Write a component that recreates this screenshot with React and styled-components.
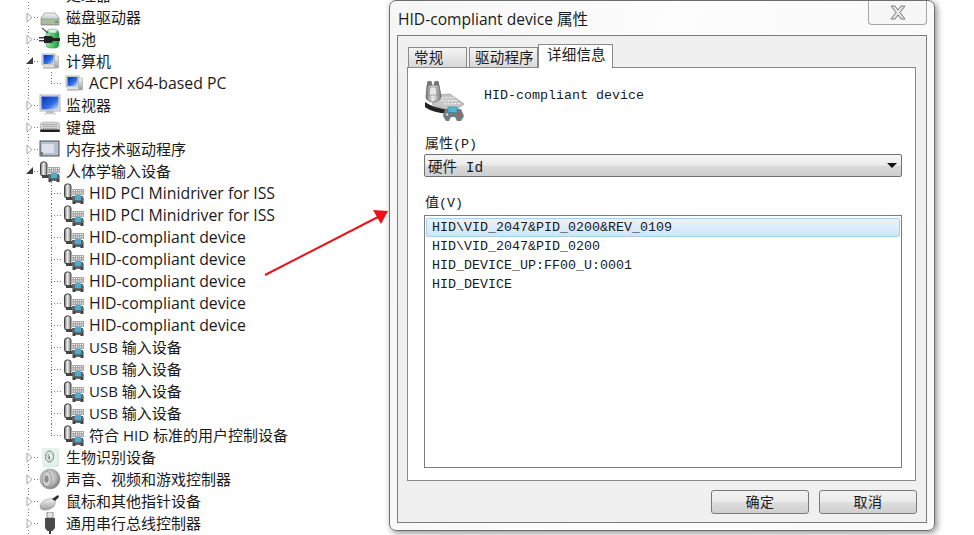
import React from "react";
import styled, { createGlobalStyle } from "styled-components";

const Global = createGlobalStyle`
  html, body { margin: 0; padding: 0; background: #fff; overflow: hidden; }
  body { width: 974px; height: 535px; }
`;

const Page = styled.div`
  position: relative;
  display: flex;
  align-items: flex-start;
  width: 974px;
  height: 535px;
  overflow: hidden;
  background: #fff;
  font-family: "Open Sans", "Noto Sans CJK SC", sans-serif;
  color: #1a1a1a;
`;

/* ---------- Device tree ---------- */
const dots = "repeating-linear-gradient(to bottom, #777 0 1px, transparent 1px 3px)";
const hdots = "repeating-linear-gradient(to right, #777 0 1px, transparent 1px 3px)";

const Tree = styled.div`
  flex: 0 0 389px;
  height: 535px;
  margin-top: -16px;
  padding-left: 26px;
  box-sizing: border-box;
`;
const Trunk = styled.div`
  background: ${dots} 2px 0 / 1px 100% no-repeat;
`;
const Row = styled.div`
  display: flex;
  align-items: center;
  height: 22px;
`;
const Expander = styled.span`
  flex: 0 0 7px;
  height: 13px;
  margin-right: 1px;
  display: flex;
  align-items: center;
  background: #fff;
`;
const Stub = styled.span`
  flex: 0 0 6px;
  height: 1px;
  background: ${hdots};
`;
const IconSlot = styled.span`
  flex: 0 0 22px;
  height: 22px;
  margin-right: ${(p) => p.$gap}px;
  display: block;
  margin-left: -1px;
`;
const Label = styled.span`
  font-size: ${(p) => (p.$latin ? 15.8 : 15)}px;
  line-height: 22px;
  white-space: nowrap;
`;
const ChildRow = styled.div`
  display: flex;
  align-items: center;
  height: 22px;
  margin-left: 25px;
  padding-left: 13px;
  background:
    ${dots} 0 0 / 1px ${(p) => (p.$last ? "50%" : "100%")} no-repeat,
    ${hdots} 0 50% / 12px 1px no-repeat;
`;

/* ---------- Dialog ---------- */
const Dialog = styled.div`
  flex: 0 0 546px;
  height: 531px;
  box-sizing: border-box;
  border: 1px solid #6f6f6f;
  border-radius: 7px;
  background: linear-gradient(100deg, #f6f6f6 0%, #fdfdfd 45%, #f9f9f9 100%);
  box-shadow: 2px 2px 6px rgba(0, 0, 0, 0.45);
  padding: 0 7px 7px;
  display: flex;
  flex-direction: column;
  position: relative;
`;
const TitleBar = styled.div`
  height: 34px;
  display: flex;
  align-items: flex-start;
  justify-content: space-between;
  flex: 0 0 34px;
`;
const Title = styled.div`
  font-size: 15.6px;
  line-height: 20px;
  margin: 8px 0 0 1px;
`;
const CloseButton = styled.div`
  width: 59px;
  height: 24px;
  box-sizing: border-box;
  border: 1px solid #a5a5a5;
  border-top: 0;
  border-radius: 0 0 4px 4px;
  background: #f7f7f7;
  display: flex;
  align-items: center;
  justify-content: center;
`;
const Frame = styled.div`
  flex: 1;
  box-sizing: border-box;
  border: 1px solid #7c7c7c;
  background: #f0f0f0;
  padding: 8px 10px 0 9px;
  display: flex;
  flex-direction: column;
`;
const Tabs = styled.div`
  display: flex;
  align-items: flex-end;
  height: 24px;
  padding-left: 1px;
  position: relative;
  z-index: 1;
`;
const Tab = styled.div`
  box-sizing: border-box;
  width: ${(p) => p.$w}px;
  height: ${(p) => (p.$active ? 24 : 21)}px;
  margin-right: ${(p) => p.$gap || 0}px;
  border: 1px solid #8a8a8a;
  border-bottom: ${(p) => (p.$active ? "0" : "1px solid #8a8a8a")};
  background: ${(p) => (p.$active ? "#fff" : "linear-gradient(#f4f4f4, #d8d8d8)")};
  font-size: 14.5px;
  line-height: 19px;
  padding-left: ${(p) => (p.$active ? 8 : 5)}px;
  white-space: nowrap;
  letter-spacing: 0.2px;
`;
const Panel = styled.div`
  height: 414px;
  box-sizing: border-box;
  margin-top: -1px;
  border: 1px solid #8a8a8a;
  background: #fff;
  padding: 12px 13px 12px 16px;
  display: flex;
  flex-direction: column;
`;
const Header = styled.div`
  display: flex;
  align-items: flex-start;
  height: 42px;
`;
const DeviceName = styled.div`
  font-family: "Liberation Mono", monospace;
  font-size: 13.33px;
  line-height: 16px;
  margin: 8px 0 0 18px;
`;
const FieldLabel = styled.div`
  font-size: 14px;
  line-height: 20px;
  margin-top: ${(p) => p.$top}px;
  margin-bottom: ${(p) => p.$bottom}px;
  padding-left: 1px;
  font-family: "Noto Sans CJK SC", sans-serif;
  span { font-family: "Liberation Mono", monospace; font-size: 13.33px; }
`;
const Combo = styled.div`
  height: 23px;
  flex: 0 0 23px;
  box-sizing: border-box;
  border: 1px solid #727272;
  border-radius: 2px;
  background: linear-gradient(#f5f5f5 0%, #ececec 45%, #d9d9d9 55%, #cfcfcf 100%);
  display: flex;
  align-items: center;
  justify-content: space-between;
  padding: 0 4px 0 3px;
  font-family: "Liberation Mono", "Noto Sans CJK SC", monospace;
  font-size: 14.5px;
  white-space: pre;
`;
const Caret = styled.div`
  width: 0;
  height: 0;
  border-left: 5px solid transparent;
  border-right: 5px solid transparent;
  border-top: 5px solid #111;
`;
const ValueList = styled.div`
  flex: 1;
  box-sizing: border-box;
  border: 1px solid #7c7c7c;
  padding: 2px 1px;
  display: flex;
  flex-direction: column;
  font-family: "Liberation Mono", monospace;
  font-size: 13.33px;
`;
const ValueRow = styled.div`
  height: 19px;
  line-height: 20px;
  box-sizing: border-box;
  padding-left: 6px;
  white-space: nowrap;
  ${(p) =>
    p.$selected &&
    `border: 1px solid #a9cfee;
     border-radius: 2px;
     padding-left: 5px;
     line-height: 18px;
     background: linear-gradient(#e9f4fd, #cfe5f8);`}
`;
const Footer = styled.div`
  display: flex;
  justify-content: flex-end;
  gap: 10px;
  margin: 9px -1px 0 0;
`;
const Button = styled.div`
  width: 98px;
  height: 24px;
  box-sizing: border-box;
  border: 1px solid #7a7a7a;
  border-radius: 3px;
  background: linear-gradient(#f3f3f3 0%, #ebebeb 45%, #dcdcdc 55%, #cfcfcf 100%);
  font-size: 14px;
  line-height: 22px;
  text-align: center;
  letter-spacing: 0.5px;
`;
const ArrowLayer = styled.svg`
  position: absolute;
  left: 0;
  top: 0;
  pointer-events: none;
`;

/* ---------- Icons ---------- */
const Svg = ({ children }) => (
  <svg width="22" height="22" viewBox="0 0 22 22" style={{ display: "block" }}>{children}</svg>
);
const Defs = () => (
  <svg width="0" height="0" style={{ position: "absolute" }}>
    <defs>
      <linearGradient id="blue" x1="0" y1="0" x2="1" y2="1">
        <stop offset="0" stopColor="#0a2fb8" />
        <stop offset="0.6" stopColor="#2f6fe0" />
        <stop offset="1" stopColor="#d8e4f6" />
      </linearGradient>
      <linearGradient id="silver" x1="0" y1="0" x2="0" y2="1">
        <stop offset="0" stopColor="#f4f4f4" />
        <stop offset="1" stopColor="#9c9c9c" />
      </linearGradient>
      <linearGradient id="green" x1="0" y1="0" x2="1" y2="0">
        <stop offset="0" stopColor="#9be8a4" />
        <stop offset="1" stopColor="#169a3e" />
      </linearGradient>
      <linearGradient id="body" x1="0" y1="0" x2="1" y2="0">
        <stop offset="0" stopColor="#6e6e6e" />
        <stop offset="0.45" stopColor="#ededed" />
        <stop offset="1" stopColor="#777" />
      </linearGradient>
      <radialGradient id="sphere" cx="0.4" cy="0.4" r="0.7">
        <stop offset="0" stopColor="#f2f2f2" />
        <stop offset="0.6" stopColor="#b4b4b4" />
        <stop offset="1" stopColor="#666" />
      </radialGradient>
    </defs>
  </svg>
);

const icons = {
  cpu: (
    <Svg><rect x="2" y="-4" width="18" height="8" rx="1" fill="url(#silver)" stroke="#888" /></Svg>
  ),
  disk: (
    <Svg>
      <path d="M2 12 L6 7 H16 L20 12 V19 H2 Z" fill="url(#silver)" stroke="#8a8a8a" strokeWidth=".7" />
      <rect x="2.5" y="13" width="17" height="5.5" fill="#a8bca0" stroke="#8c8c8c" strokeWidth=".5" />
      <rect x="16" y="15" width="3" height="2" fill="#3fae4e" />
    </Svg>
  ),
  battery: (
    <Svg>
      <rect x="7" y="2" width="13" height="18" rx="4" fill="url(#green)" stroke="#3f8e55" strokeWidth=".6" />
      <rect x="9" y="1" width="9" height="4" rx="2" fill="#d6efd9" stroke="#6a9c75" strokeWidth=".5" />
      <path d="M3 0 L9 5" stroke="#555" strokeWidth="1.2" fill="none" />
      <rect x="0" y="9" width="7" height="1.4" fill="#333" />
      <rect x="0" y="12" width="7" height="1.4" fill="#333" />
      <path d="M5 8 H11 A3.5 3.5 0 0 1 11 15 H5 Z" fill="#222" />
      <rect x="13" y="10" width="8" height="3" fill="#222" />
    </Svg>
  ),
  computer: (
    <Svg>
      <rect x="3" y="4" width="13" height="11" fill="#dfe4ea" stroke="#9aa0a8" strokeWidth=".7" />
      <rect x="4.5" y="5" width="10" height="9" fill="url(#blue)" />
      <rect x="15.5" y="6" width="4" height="12" fill="url(#silver)" stroke="#999" strokeWidth=".5" />
      <rect x="4" y="16" width="11" height="2.5" fill="url(#silver)" />
    </Svg>
  ),
  monitor: (
    <Svg>
      <rect x="1" y="1" width="20" height="16" fill="#e8e8e8" stroke="#999" strokeWidth=".7" />
      <rect x="2.5" y="2.5" width="17" height="13" fill="url(#blue)" />
      <rect x="7" y="17" width="8" height="2" fill="#bdbdbd" />
      <rect x="5" y="19" width="12" height="1.5" fill="#d4d4d4" />
    </Svg>
  ),
  keyboard: (
    <Svg>
      <rect x="1" y="6" width="20" height="9" rx="4" fill="#d4d4d4" stroke="#9c9c9c" strokeWidth=".5" />
      <path d="M4 8.5 H18 M4 10.5 H18 M4 12.5 H18" stroke="#8f8f8f" strokeWidth="1" strokeDasharray="1 .8" />
      <rect x="1" y="13.5" width="20" height="2.5" rx="1.2" fill="#1f1f1f" />
    </Svg>
  ),
  memory: (
    <Svg>
      <rect x="1" y="3" width="19" height="15" fill="#b9c0d2" stroke="#2a2a2a" strokeWidth=".8" />
      <rect x="3" y="6" width="12" height="9" fill="#dde1ec" />
      <rect x="1" y="14" width="3" height="4" fill="#777" />
    </Svg>
  ),
  hid: (
    <Svg>
      <rect x="1.5" y="2" width="6.5" height="14" rx="2.5" fill="url(#body)" stroke="#3f3f3f" strokeWidth="1" />
      <rect x="3" y="15" width="6" height="3" fill="#444" />
      <rect x="8" y="7" width="13" height="6" fill="#a9a9a9" />
      <path d="M9 8.5 H20 M9 11 H20" stroke="#f5f5f5" strokeWidth="1" strokeDasharray="1 1" />
      <path d="M9 14 H20 L21 18 L19 21 H11 L9 18 Z" fill="#5f6669" />
      <rect x="12" y="13" width="6" height="5" fill="#4dadcf" />
      <rect x="9.5" y="19" width="3" height="3" fill="#444" />
      <rect x="17.5" y="19" width="3" height="3" fill="#444" />
    </Svg>
  ),
  bio: (
    <Svg>
      <rect x="3" y="2" width="15" height="17" fill="#e6f1ec" />
      <path d="M19 3 V20 H4" stroke="#b8d8cf" fill="none" />
      <ellipse cx="10.5" cy="10.5" rx="4" ry="5.5" fill="none" stroke="#6f7c76" strokeWidth="1" />
      <path d="M10.5 8 C8 8 9 13 11 14 M10.5 10 V13" fill="none" stroke="#6f7c76" strokeWidth=".9" />
    </Svg>
  ),
  speaker: (
    <Svg>
      <circle cx="11" cy="11" r="10" fill="url(#sphere)" stroke="#8a8a8a" strokeWidth=".6" />
      <ellipse cx="8" cy="11" rx="4.5" ry="7.5" fill="#d0d0d0" stroke="#7b7b7b" strokeWidth=".6" />
      <ellipse cx="7.5" cy="11" rx="2" ry="3.5" fill="#8a8a8a" />
    </Svg>
  ),
  mouse: (
    <Svg>
      <path d="M1 16 C2 11 9 8 14 9 C17 10 17 13 15 16 C12 20 5 21 2 19 Z" fill="url(#silver)" stroke="#8f8f8f" strokeWidth=".6" />
      <path d="M13 9 L19 5 L20 7 L16 11 Z" fill="#2a2a2a" />
    </Svg>
  ),
  usb: (
    <Svg>
      <rect x="8" y="0" width="6" height="6" fill="#e4e4e4" stroke="#777" strokeWidth=".8" />
      <path d="M6 6 H16 V16 L13.5 19 H8.5 L6 16 Z" fill="#4a4a4a" />
      <rect x="10" y="19" width="2" height="3" fill="#3a3a3a" />
    </Svg>
  ),
};

const BigDeviceIcon = () => (
  <svg width="42" height="42" viewBox="0 0 42 42" style={{ display: "block", flex: "0 0 42px" }}>
    <path d="M1 22 C8 27 20 30 32 29 L32 33 C18 35 6 31 1 27 Z" fill="#222" />
    <path d="M14 15 L26 14 L40 24 L32 30 C20 30 12 27 8 24 Z" fill="#c4c4c4" stroke="#8b8b8b" strokeWidth=".6" />
    <path d="M18 18 L30 17.5 M17 21 L34 20.5 M20 24 L37 23.5" stroke="#f6f6f6" strokeWidth="1.2" strokeDasharray="2 1.4" />
    <rect x="3" y="1" width="5" height="5" rx="1.5" fill="#777" />
    <rect x="10" y="1" width="5" height="5" rx="1.5" fill="#777" />
    <path d="M3 5 H15 L17 16 C16 23 5 24 2 18 Z" fill="url(#body)" stroke="#5f5f5f" strokeWidth=".7" />
    <path d="M6 7 H12 L13 15 H5 Z" fill="#e8e8e8" stroke="#7d7d7d" strokeWidth=".6" />
    <path d="M21 29 H37 L40 36 L37 41 H33 L31 37 H27 L25 41 H22 L19 36 Z" fill="#747b7e" />
    <rect x="24" y="27" width="9" height="5.5" fill="#55b5d4" stroke="#2d7f9c" strokeWidth=".6" />
    <circle cx="35.5" cy="34" r="1.2" fill="#e04a3a" />
    <circle cx="23" cy="34.5" r="1.2" fill="#d8d8d8" />
  </svg>
);

const Triangle = ({ open }) =>
  open ? (
    <svg width="7" height="8" viewBox="0 0 7 8"><path d="M7 0 V7 H0 Z" fill="#3a3a3a" /></svg>
  ) : (
    <svg width="7" height="11" viewBox="0 0 7 11"><path d="M1 1 L6 5.5 L1 10 Z" fill="#fff" stroke="#a6a6a6" /></svg>
  );

const isLatin = (s) => /^[\x20-\x7e]+$/.test(s);

const tree = [
  { icon: "cpu", label: "处理器" },
  { icon: "disk", label: "磁盘驱动器" },
  { icon: "battery", label: "电池" },
  { icon: "computer", label: "计算机", open: true, children: [{ icon: "computer", label: "ACPI x64-based PC" }] },
  { icon: "monitor", label: "监视器" },
  { icon: "keyboard", label: "键盘" },
  { icon: "memory", label: "内存技术驱动程序" },
  {
    icon: "hid",
    label: "人体学输入设备",
    open: true,
    children: [
      "HID PCI Minidriver for ISS",
      "HID PCI Minidriver for ISS",
      "HID-compliant device",
      "HID-compliant device",
      "HID-compliant device",
      "HID-compliant device",
      "HID-compliant device",
      "USB 输入设备",
      "USB 输入设备",
      "USB 输入设备",
      "USB 输入设备",
      "符合 HID 标准的用户控制设备",
    ].map((label) => ({ icon: "hid", label })),
  },
  { icon: "bio", label: "生物识别设备" },
  { icon: "speaker", label: "声音、视频和游戏控制器" },
  { icon: "mouse", label: "鼠标和其他指针设备" },
  { icon: "usb", label: "通用串行总线控制器" },
];

const values = [
  "HID\\VID_2047&PID_0200&REV_0109",
  "HID\\VID_2047&PID_0200",
  "HID_DEVICE_UP:FF00_U:0001",
  "HID_DEVICE",
];

export default function App() {
  return (
    <Page>
      <Global />
      <Defs />
      <Tree>
        <Trunk>
          {tree.map((node) => (
            <React.Fragment key={node.label}>
              <Row>
                <Expander><Triangle open={node.open} /></Expander>
                <Stub />
                <IconSlot $gap={5}>{icons[node.icon]}</IconSlot>
                <Label>{node.label}</Label>
              </Row>
              {node.children &&
                node.children.map((c, i) => (
                  <ChildRow key={i} $last={i === node.children.length - 1}>
                    <IconSlot $gap={4}>{icons[c.icon]}</IconSlot>
                    <Label $latin={isLatin(c.label)}>{c.label}</Label>
                  </ChildRow>
                ))}
            </React.Fragment>
          ))}
        </Trunk>
      </Tree>
      <Dialog>
        <TitleBar>
          <Title>HID-compliant device 属性</Title>
          <CloseButton>
            <svg width="16" height="15" viewBox="0 0 16 15">
              <path d="M1 1 H5 L8 5 L11 1 H15 L10 7.5 L15 14 H11 L8 10 L5 14 H1 L6 7.5 Z" fill="#e6e6e6" stroke="#777" strokeWidth="1" strokeLinejoin="round" />
            </svg>
          </CloseButton>
        </TitleBar>
        <Frame>
          <Tabs>
            <Tab $w={59} $gap={2}>常规</Tab>
            <Tab $w={69}>驱动程序</Tab>
            <Tab $w={75} $active>详细信息</Tab>
          </Tabs>
          <Panel>
            <Header>
              <BigDeviceIcon />
              <DeviceName>HID-compliant device</DeviceName>
            </Header>
            <FieldLabel $top={10} $bottom={-1}>属性<span>(P)</span></FieldLabel>
            <Combo>
              <div>硬件 Id</div>
              <Caret />
            </Combo>
            <FieldLabel $top={14} $bottom={1}>值<span>(V)</span></FieldLabel>
            <ValueList>
              {values.map((v, i) => (
                <ValueRow key={v} $selected={i === 0}>{v}</ValueRow>
              ))}
            </ValueList>
          </Panel>
          <Footer>
            <Button>确定</Button>
            <Button>取消</Button>
          </Footer>
        </Frame>
      </Dialog>
      <ArrowLayer width="974" height="535" viewBox="0 0 974 535">
        <path d="M265 275 L378 217" stroke="#e8141c" strokeWidth="2" fill="none" />
        <path d="M388 211 L373 210 L381 224 Z" fill="#f20f16" />
      </ArrowLayer>
    </Page>
  );
}
